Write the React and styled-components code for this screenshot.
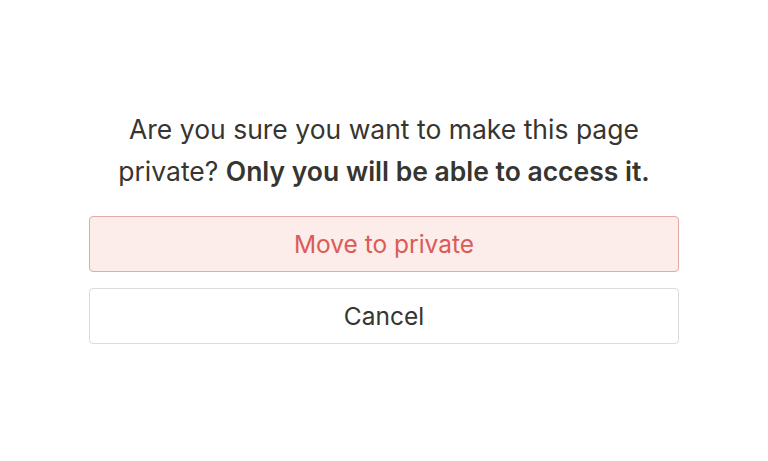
import React from 'react'
import styled, { createGlobalStyle } from 'styled-components'

const GlobalStyle = createGlobalStyle`
  html, body {
    margin: 0;
    padding: 0;
    background: #ffffff;
  }
  body {
    font-family: Inter, "Noto Sans", sans-serif;
    color: #37352f;
  }
`

const Page = styled.div`
  width: 768px;
  height: 461px;
  display: flex;
  justify-content: center;
  box-sizing: border-box;
  padding-top: 108px;
`

const Dialog = styled.div`
  width: 590px;
  display: flex;
  flex-direction: column;
  align-items: stretch;
`

const Message = styled.p`
  margin: 0 auto 24px;
  max-width: 545px;
  text-align: center;
  font-size: 26.5px;
  line-height: 42px;
  letter-spacing: 0;
  color: #37352f;

  strong {
    font-weight: 600;
  }
`

const Button = styled.button`
  height: 56px;
  width: 100%;
  border-radius: 4px;
  font-family: inherit;
  font-size: 24.5px;
  cursor: pointer;
  background: ${p => (p.$danger ? '#fcecea' : '#ffffff')};
  border: 1px solid ${p => (p.$danger ? '#e6aaa6' : '#dddcda')};
  color: ${p => (p.$danger ? '#db5b56' : '#37352f')};

  & + & {
    margin-top: 16px;
  }
`

export default function App() {
  return (
    <Page>
      <GlobalStyle />
      <Dialog>
        <Message>
          Are you sure you want to make this page private?{' '}
          <strong>Only you will be able to access it.</strong>
        </Message>
        <Button $danger>Move to private</Button>
        <Button>Cancel</Button>
      </Dialog>
    </Page>
  )
}
